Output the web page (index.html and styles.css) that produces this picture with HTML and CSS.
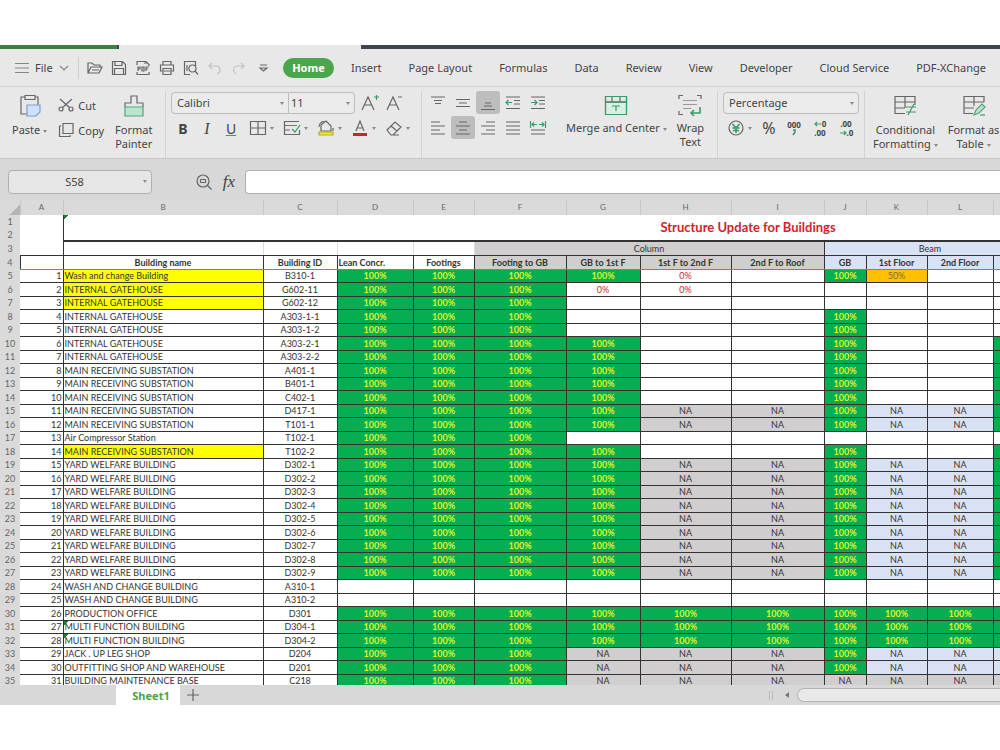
FILE: index.html
```html
<!DOCTYPE html>
<html lang="en">
<head>
<meta charset="utf-8">
<title>Structure Update for Buildings</title>
<link rel="stylesheet" href="styles.css">
</head>
<body>
<div class="app">
  <div class="titlebar"><span class="doc-tab"></span><span class="sheet-tab"></span><span class="title-rest"></span></div>

  <header class="menubar">
    <button class="file-btn">
      <svg class="hamburger" width="14" height="12" viewBox="0 0 14 12"><path d="M0 1.500h14M0 6h14M0 10.500h14"/></svg>
      <span>File</span>
      <svg class="light" width="10" height="8" viewBox="0 0 10 8"><path d="M1 2l4 4 4-4"/></svg>
    </button>
    <div class="quick">
      <button aria-label="Open"><svg width="16" height="16" viewBox="0 0 16 16"><path d="M1 13V3h4l2 2h6v2M1 13l3-6h11l-3 6zM5 10h7"/></svg></button>
      <button aria-label="Save"><svg width="16" height="16" viewBox="0 0 16 16"><path d="M1.500 1.500h10l3 3v10h-13zM4 1.500v4h7v-4M3.500 14V8.500h9V14"/></svg></button>
      <button aria-label="Export PDF"><svg width="16" height="16" viewBox="0 0 16 16"><path d="M2 5V1.500h9l3 3V6M2 12v2.500h12V12M9 3h3M3 11V7h2v2H3M7 7v4h2V7zM11 11V7h3M11 9h2"/></svg></button>
      <button aria-label="Print"><svg width="16" height="16" viewBox="0 0 16 16"><path d="M4 5V1.500h8V5M4 11H1.500V5h13v6H12M4 8.500h8v6H4zM5 11h6"/></svg></button>
      <button aria-label="Print preview"><svg width="16" height="16" viewBox="0 0 16 16"><path d="M7 14.500H1.500v-13h11V6M4 5v6"/><circle cx="9.500" cy="8.500" r="3.500"/><path d="M12 11l3 3.500"/></svg></button>
      <button aria-label="Undo" class="faint"><svg width="16" height="16" viewBox="0 0 16 16"><path d="M5 3L2 6l3 3M2 6h8c4 1 4 6 0 8"/></svg></button>
      <button aria-label="Redo" class="faint"><svg width="16" height="16" viewBox="0 0 16 16"><path d="M10 3l3 3-3 3M13 6H6C1 7 2 12 5 14"/></svg></button>
      <button aria-label="More"><svg width="16" height="16" viewBox="0 0 16 16"><path d="M5 5h7M5 8l3.500 3L12 8z"/></svg></button>
    </div>
    <nav class="tabs">
      <button class="tab home">Home</button>
      <button class="tab">Insert</button>
      <button class="tab">Page Layout</button>
      <button class="tab">Formulas</button>
      <button class="tab">Data</button>
      <button class="tab">Review</button>
      <button class="tab">View</button>
      <button class="tab">Developer</button>
      <button class="tab">Cloud Service</button>
      <button class="tab">PDF-XChange</button>
    </nav>
  </header>

  <section class="ribbon">
    <div class="group clipboard">
      <button class="big">
        <svg width="24" height="24" viewBox="0 0 24 24"><path d="M7 3H3v17h7M17 3h3v8M7 1.500h10v4H7z"/><path class="blue" d="M9 11h13v7l-4 4H9z"/></svg>
        <span>Paste<i class="caret"></i></span>
      </button>
      <div class="stack">
        <button class="inline"><svg width="16" height="16" viewBox="0 0 16 16"><path d="M2 2l10 9M14 2L4 11"/><circle cx="3" cy="12" r="2"/><circle cx="13" cy="12" r="2"/></svg>Cut</button>
        <button class="inline"><svg width="16" height="16" viewBox="0 0 16 16"><path d="M5 1.500h10v10H5zM3 4H1.500v10.500H12V13"/></svg>Copy</button>
      </div>
      <button class="big">
        <svg width="24" height="24" viewBox="0 0 24 24"><path d="M3 13V9h6V2h6v7h6v4"/><path class="greenfill" d="M3 13h18v9H3z"/></svg>
        <span>Format<br>Painter</span>
      </button>
    </div>

    <div class="group font">
      <div class="row">
        <label class="pick face"><select aria-label="Font"><option>Calibri</option></select></label>
        <label class="pick size"><select aria-label="Font size"><option>11</option></select></label>
        <button class="letter" aria-label="Grow font"><svg width="20" height="18" viewBox="0 0 20 18"><path d="M2 16L8 3l6 13M4 11h8"/><path class="green" d="M14 3h5M16.500 1v5"/></svg></button>
        <button class="letter" aria-label="Shrink font"><svg width="20" height="18" viewBox="0 0 20 18"><path d="M2 16L8 3l6 13M4 11h8M13 3h4"/></svg></button>
      </div>
      <div class="row marks">
        <button class="sq"><b>B</b></button>
        <button class="sq"><em>I</em></button>
        <button class="sq"><u>U</u></button>
        <button class="drop" aria-label="Borders"><svg width="18" height="18" viewBox="0 0 18 18"><path d="M1.500 2.500h15v13h-15zM9 2.500v13M1.500 9h15"/></svg><i class="caret"></i></button>
        <button class="drop" aria-label="Cell style"><svg width="18" height="18" viewBox="0 0 18 18"><path d="M16 2.500H1.500v13h15V11M1.500 6.500H13M1.500 11H7"/><path class="green" d="M4 6.500h10M9 10l3 3 5-7"/></svg><i class="caret"></i></button>
        <button class="drop" aria-label="Fill color"><svg width="18" height="18" viewBox="0 0 18 18"><path d="M4 6l5-4 5 5v5H4zM2 8c0-4 3-6 6-5M16 9v3"/><path class="yellow" d="M2 13h14v3H2z"/></svg><i class="caret"></i></button>
        <button class="drop" aria-label="Font color"><svg width="18" height="18" viewBox="0 0 18 18"><path d="M5 12L9 2l4 10M6 9h6"/><path class="red" d="M2 14h14v3H2z"/></svg><i class="caret"></i></button>
        <button class="drop" aria-label="Clear"><svg width="18" height="18" viewBox="0 0 18 18"><path d="M2 11l8-8 6 5-8 8H6zM6 7l6 5M8 16h6"/></svg><i class="caret"></i></button>
      </div>
    </div>

    <div class="group align">
      <div class="aligns">
        <button aria-label="Top align"><svg width="18" height="18" viewBox="0 0 18 18"><path d="M2 3h14M5 6.500h8M6 9.500h6"/></svg></button>
        <button aria-label="Middle align"><svg width="18" height="18" viewBox="0 0 18 18"><path d="M2 5.500h14M5 9h8M2 12.500h14"/></svg></button>
        <button aria-label="Bottom align" class="on"><svg width="18" height="18" viewBox="0 0 18 18"><path d="M6 9h6M5 12h8M2 15.500h14"/></svg></button>
        <button aria-label="Decrease indent"><svg width="18" height="18" viewBox="0 0 18 18"><path d="M2 3h14M10 6.500h6M10 10h6M2 14.500h14"/><path class="green" d="M2 8.500h6M4.500 6L2 8.500 4.500 11"/></svg></button>
        <button aria-label="Increase indent"><svg width="18" height="18" viewBox="0 0 18 18"><path d="M2 3h14M10 6.500h6M10 10h6M2 14.500h14"/><path class="green" d="M2 8.500h6M5.500 6L8 8.500 5.500 11"/></svg></button>
        <button aria-label="Align left"><svg width="18" height="18" viewBox="0 0 18 18"><path d="M2 3h9M2 7h14M2 11h9M2 15h14"/></svg></button>
        <button aria-label="Center" class="on"><svg width="18" height="18" viewBox="0 0 18 18"><path d="M5 3h8M2 7h14M5 11h8M2 15h14"/></svg></button>
        <button aria-label="Align right"><svg width="18" height="18" viewBox="0 0 18 18"><path d="M7 3h9M2 7h14M7 11h9M2 15h14"/></svg></button>
        <button aria-label="Justify"><svg width="18" height="18" viewBox="0 0 18 18"><path d="M2 3h14M2 7h14M2 11h14M2 15h14"/></svg></button>
        <button aria-label="Distribute"><svg width="18" height="18" viewBox="0 0 18 18"><path d="M2 11h14M2 15h14"/><path class="green" d="M1.500 2v7M16.500 2v7M3 5.500h5M10 5.500h5M5 3.500l-2 2 2 2M13 3.500l2 2-2 2"/></svg></button>
      </div>
      <button class="big merge">
        <svg width="24" height="24" viewBox="0 0 24 24"><path class="greenfill pale" d="M1.500 8h21v12.500h-21z"/><path d="M1.500 2.500h21V8h-21zM8 2.500V8M16 2.500V8"/><path class="green" d="M1.500 2.500h21v18h-21zM1.500 8h21M8 12h8M12 12v5"/></svg>
        <span>Merge and Center<i class="caret"></i></span>
      </button>
      <button class="big">
        <svg width="24" height="24" viewBox="0 0 24 24"><path d="M1 5V1.500h4M19 1.500h4V5M1 17v3.500h4"/><path class="soft" d="M5 6.500h14M5 10.500h14M5 14.500h8"/><path class="green thick" d="M22 13v6h-9M16 16l-3 3 3 3"/></svg>
        <span>Wrap<br>Text</span>
      </button>
    </div>

    <div class="group number">
      <div class="row"><label class="pick format"><select aria-label="Number format"><option>Percentage</option></select></label></div>
      <div class="row formats">
        <button class="drop" aria-label="Currency"><svg width="18" height="18" viewBox="0 0 18 18"><circle cx="9" cy="9" r="7"/><path class="green thick" d="M5.500 5L9 9l3.500-4M5.500 9h7M6 11.500h6M9 9v5"/></svg><i class="caret"></i></button>
        <button class="pct">%</button>
        <button class="digits" aria-label="Comma style"><span>000</span><svg width="16" height="8" viewBox="0 0 16 8"><path class="green thick" d="M7 1h2v2L7 6"/></svg></button>
        <button class="digits" aria-label="Increase decimal"><span class="pair"><svg width="8" height="8" viewBox="0 0 8 8"><path class="green" d="M7 4H1M3 2L1 4l2 2"/></svg>0</span><span>.00</span></button>
        <button class="digits" aria-label="Decrease decimal"><span>.00</span><span class="pair"><svg width="8" height="8" viewBox="0 0 8 8"><path class="green" d="M1 4h6M5 2l2 2-2 2"/></svg>.0</span></button>
      </div>
    </div>

    <div class="group styles">
      <button class="big">
        <svg width="24" height="24" viewBox="0 0 24 24"><path d="M12 19.500H2v-17h20V11M2 8h20M2 14h10M12 2.500V14"/><path class="green" d="M13 13h10M13 18h10M21 10l-6 11"/></svg>
        <span>Conditional<br>Formatting<i class="caret"></i></span>
      </button>
      <button class="big">
        <svg width="24" height="24" viewBox="0 0 24 24"><path d="M11 19.500H2v-17h20V8M2 8h20M2 14h10M12 2.500V12"/><path class="greenfill" d="M12 21l2-5 6-6 3 3-6 6z"/><path class="green" d="M18 21h5"/></svg>
        <span>Format as<br>Table<i class="caret"></i></span>
      </button>
    </div>
  </section>

  <section class="formula">
    <label class="namebox"><input aria-label="Name box" value="S58"><i class="caret"></i></label>
    <button aria-label="Find" class="find"><svg width="18" height="18" viewBox="0 0 18 18"><circle cx="8" cy="8" r="6"/><path d="M5.500 6.500h5M5.500 9.500h5M5.500 6.500v3M10.500 6.500v3M12.500 12.500l4 4"/></svg></button>
    <button class="fx"><em>fx</em></button>
    <input class="formula-input" aria-label="Formula">
  </section>

  <main class="sheet">
    <table class="grid">
      <colgroup>
        <col class="c-num"><col class="c-a"><col class="c-b"><col class="c-c"><col class="c-d"><col class="c-e"><col class="c-f"><col class="c-g"><col class="c-h"><col class="c-i"><col class="c-j"><col class="c-k"><col class="c-l"><col class="c-m"><col class="c-n">
      </colgroup>
      <thead>
        <tr class="letters"><th class="corner"></th><th>A</th><th>B</th><th>C</th><th>D</th><th>E</th><th>F</th><th>G</th><th>H</th><th>I</th><th>J</th><th>K</th><th>L</th><th></th><th></th></tr>
        <tr><th class="num">1</th><td class="plain" rowspan="3"></td><td class="title flag" colspan="13" rowspan="2">Structure Update for Buildings</td></tr>
        <tr><th class="num">2</th></tr>
        <tr class="tall"><th class="num">3</th><td class="thin"></td><td class="thin"></td><td class="thin"></td><td class="thin"></td><td class="grey" colspan="4">Column</td><td class="blue" colspan="4">Beam</td><td></td></tr>
        <tr class="tall heads"><th class="num">4</th><td></td><td>Building name</td><td>Building ID</td><td class="left">Lean Concr.</td><td>Footings</td><td class="grey">Footing to GB</td><td class="grey">GB to 1st F</td><td class="grey">1st F to 2nd F</td><td class="grey">2nd F to Roof</td><td class="blue">GB</td><td class="blue">1st Floor</td><td class="blue">2nd Floor</td><td class="blue"></td><td></td></tr>
      </thead>
      <tbody id="rows"></tbody>
    </table>
  </main>

  <footer class="sheetbar">
    <button class="sheet-name">Sheet1</button>
    <button class="add" aria-label="Add sheet"><svg width="14" height="14" viewBox="0 0 14 14"><path d="M7 1v12M1 7h12"/></svg></button>
    <span class="split"></span>
    <button class="scroll-left" aria-label="Scroll left"></button>
    <span class="track"></span>
  </footer>
</div>
<script src="rows.js"></script>
</body>
</html>
```

FILE: styles.css
```css
* { box-sizing: border-box; }

body {
  margin: 0;
  height: 100vh;
  padding: 45px 0;
  background: #fff;
  color: #444;
  font: 11px/15px "Noto Sans", "Open Sans", sans-serif;
  overflow: hidden;
}

button, input, select { font: inherit; color: inherit; }
button { border: 0; padding: 0; background: none; white-space: nowrap; }
svg { display: block; flex: none; fill: none; stroke: #666; stroke-width: 1.2; }
svg .green { stroke: #3a9c68; }
svg .thick { stroke-width: 1.6; }
svg .greenfill { fill: #b9e6cd; stroke: #58a27c; }
svg .pale { fill: #d9efe3; }
svg .blue { fill: #cfe0fa; stroke: #7d9fd4; }
svg .yellow { fill: #f2ea1c; stroke: #b3ad35; }
svg .red { fill: #d5202a; stroke: none; }
svg .soft { stroke: #999; }

.app { display: flex; flex-direction: column; height: 100%; overflow: hidden; background: #e8e8e8; }

.titlebar { display: flex; flex: none; height: 4px; }
.doc-tab { width: 119px; background: #3a813d; border-right: 2px solid #3b4350; }
.sheet-tab { width: 242px; }
.title-rest { flex: 1; background: #3b4350; }

.menubar { display: flex; flex: none; align-items: center; height: 38px; border-bottom: 1px solid #d2d2d2; }
.file-btn { display: flex; align-items: center; gap: 6px; width: 79px; height: 22px; padding-left: 15px; border-right: 1px solid #cfcfcf; }
.hamburger, .light { stroke: #888; }
.quick { display: flex; gap: 8px; padding-left: 8px; }
.faint svg { stroke: #c2c2c2; }
.tabs { display: flex; align-items: center; gap: 27px; margin-left: 12px; }
.tab { height: 20px; }
.home { width: 51px; margin-right: -10px; border-radius: 10px; background: #4aa54c; color: #fff; font-weight: bold; }

.ribbon { display: flex; flex: none; height: 72px; padding-top: 4px; border-bottom: 1px solid #c6c6c6; }
.group { display: flex; flex: none; border-right: 1px solid #d2d2d2; }
.big { display: flex; flex-direction: column; align-items: center; justify-content: flex-start; gap: 5px; padding-top: 3px; line-height: 14px; }
.caret { display: inline-block; margin-left: 3px; border: 2px solid transparent; border-top: 3px solid #888; border-bottom: 0; vertical-align: middle; }
.row { display: flex; align-items: center; height: 23px; }

.clipboard { width: 166px; gap: 11px; padding-left: 12px; }
.stack { display: flex; flex-direction: column; gap: 9px; padding-top: 6px; }
.inline { display: flex; align-items: center; gap: 4px; height: 16px; }

.font { flex-direction: column; gap: 2px; width: 256px; padding-left: 5px; }
.pick { position: relative; display: block; height: 22px; border: 1px solid #bdbdbd; background: #ebebeb; }
.pick select { width: 100%; height: 20px; padding: 0 5px; border: 0; background: none; appearance: none; }
.pick::after { content: ""; position: absolute; top: 9px; right: 4px; border: 2px solid transparent; border-top: 3px solid #888; border-bottom: 0; }
.face { width: 118px; border-radius: 4px 0 0 4px; }
.size { width: 66px; border-left: 0; border-radius: 0 4px 4px 0; }
.size select { padding-left: 2px; }
.letter { margin-left: 5px; }
.marks { height: 24px; }
.sq { width: 24px; font-size: 14px; }
.sq em { font-family: "Liberation Serif", serif; font-size: 16px; }
.sq u { text-decoration-color: #3a9c68; }
.drop { display: flex; align-items: center; width: 34px; }
.marks .drop:nth-child(4) { margin-left: 6px; }

.align { width: 296px; padding-left: 4px; }
.aligns { display: grid; grid-template-columns: repeat(5, 24px); grid-template-rows: 23px 23px; gap: 2px 1px; align-content: start; }
.aligns button { display: flex; align-items: center; justify-content: center; border-radius: 3px; }
.on { background: #bdbdbd; }
.merge { margin-left: 16px; }
.align .big { gap: 3px; }
.merge + .big { margin-left: 10px; }

.number { flex-direction: column; gap: 2px; width: 147px; padding-left: 5px; }
.format { width: 136px; border-radius: 4px; }
.formats { height: 24px; padding-left: 4px; }
.formats .drop { width: 32px; }
.pct { width: 20px; font-size: 16px; }
.digits { display: flex; flex-direction: column; align-items: center; width: 22px; margin-left: 4px; font-size: 8px; line-height: 9px; font-weight: bold; }
.pair { display: flex; align-items: center; }

.styles { gap: 10px; padding-left: 8px; border-right: 0; }
.styles .big { gap: 5px; }

.formula { display: flex; flex: none; align-items: center; height: 41px; padding: 4px 0 0 8px; background: #d8d8d8; }
.namebox { display: flex; align-items: center; width: 144px; height: 24px; padding-right: 4px; border: 1px solid #b0b0b0; border-radius: 4px; background: #e6e6e6; }
.namebox input { flex: 1; min-width: 0; border: 0; background: none; text-align: center; }
.find { margin-left: 43px; }
.fx { width: 22px; margin: 0 5px; font-family: "Liberation Serif", serif; font-size: 17px; }
.formula-input { flex: 1; height: 24px; border: 1px solid #b0b0b0; border-right: 0; border-radius: 4px 0 0 4px; background: #fff; }

.sheet { flex: 1; min-height: 0; overflow: hidden; background: #fff; }
.grid { width: 1433px; table-layout: fixed; border-collapse: collapse; color: #333; font: 9px/11px Lato, sans-serif; }
.c-num { width: 20px; } .c-a { width: 43px; } .c-b { width: 200px; } .c-c { width: 74px; }
.c-d { width: 76px; } .c-e { width: 61px; } .c-f { width: 92px; } .c-g { width: 74px; }
.c-h { width: 91px; } .c-i { width: 93px; } .c-j { width: 42px; } .c-k { width: 61px; }
.c-l { width: 66px; } .c-m { width: 43px; } .c-n { width: 397px; }
.grid tr { height: 13px; }
.grid .tall { height: 14px; }
.grid td, .grid th { padding: 0; border: 1px solid #333; text-align: center; white-space: nowrap; overflow: hidden; }
.grid th { border: 0; background: #dadada; color: #666; font-weight: normal; }
.grid .letters { height: 15px; font-size: 8px; }
.grid .letters th { border-right: 1px solid #c6c6c6; }
.grid .corner { background: linear-gradient(135deg, #dadada 70%, #b5b5b5 70%); }
.grid .plain { border-top: 0; border-left: 0; }
.grid .title { border-top: 0; border-bottom: 2px solid #333; color: #d3232b; font-size: 13px; font-weight: bold; }
.grid .thin { border-left-color: #ddd; border-right-color: #ddd; }
.grid .heads td { border-bottom-color: #5c9c55; font-weight: bold; }
.grid .left { padding-left: 1px; text-align: left; }
.grid .name { padding-left: 1px; text-align: left; }
.grid .seq { padding-right: 1px; border-left: 0; text-align: right; }
.grid .yellow { background: #ff0; }
.grid .grey { background: #d0cece; }
.grid .blue { background: #d9e1f4; }
.grid .done { background: #07ae51; color: #dff52a; font-weight: bold; }
.grid .part { background: #ffc000; color: #75702c; }
.grid .zero { color: #d3232b; }
.grid .flag { background-image: linear-gradient(135deg, #1f7a35 3px, transparent 3px); background-repeat: no-repeat; }

.sheetbar { display: flex; flex: none; align-items: center; height: 20px; padding-left: 116px; background: #d8d8d8; }
.sheet-name { width: 64px; height: 20px; padding-left: 6px; background: #fff; color: #4aa54c; font-weight: bold; }
.add { margin-left: 6px; }
.split { width: 4px; height: 9px; margin-left: auto; border: 1px solid #bbb; border-width: 0 1px; }
.scroll-left { margin: 0 8px 0 12px; border: 3px solid transparent; border-right: 4px solid #777; border-left: 0; }
.track { width: 23%; height: 14px; border: 1px solid #b5b5b5; border-right: 0; border-radius: 7px 0 0 7px; background: #e9e9e9; }
```

FILE: rows.js
```js
// Each row: building name, building ID, status of columns D to M.
// x = 100%, z = 0%, h = 50%, g = NA on grey, b = NA on blue,
// X = green without a value, B / G = blue / grey without a value, . = empty.
const rows = [
  ["Wash and change Building", "B310-1", "xxxxz.xh..", "yellow"],
  ["INTERNAL GATEHOUSE", "G602-11", "xxxzz.....", "yellow"],
  ["INTERNAL GATEHOUSE", "G602-12", "xxx.......", "yellow"],
  ["INTERNAL GATEHOUSE", "A303-1-1", "xxx...x..."],
  ["INTERNAL GATEHOUSE", "A303-1-2", "xxx...x..."],
  ["INTERNAL GATEHOUSE", "A303-2-1", "xxxx..x..X"],
  ["INTERNAL GATEHOUSE", "A303-2-2", "xxxx..x..X"],
  ["MAIN RECEIVING SUBSTATION", "A401-1", "xxxx..x..X"],
  ["MAIN RECEIVING SUBSTATION", "B401-1", "xxxx..x..X"],
  ["MAIN RECEIVING SUBSTATION", "C402-1", "xxxx..x..X"],
  ["MAIN RECEIVING SUBSTATION", "D417-1", "xxxxggxbbX"],
  ["MAIN RECEIVING SUBSTATION", "T101-1", "xxxxggxbbX"],
  ["Air Compressor Station", "T102-1", "xxx......."],
  ["MAIN RECEIVING SUBSTATION", "T102-2", "xxxx..x..X", "yellow"],
  ["YARD WELFARE BUILDING", "D302-1", "xxxxggxbbX"],
  ["YARD WELFARE BUILDING", "D302-2", "xxxxggxbbX"],
  ["YARD WELFARE BUILDING", "D302-3", "xxxxggxbbX"],
  ["YARD WELFARE BUILDING", "D302-4", "xxxxggxbbX"],
  ["YARD WELFARE BUILDING", "D302-5", "xxxxggxbbX"],
  ["YARD WELFARE BUILDING", "D302-6", "xxxxggxbbX"],
  ["YARD WELFARE BUILDING", "D302-7", "xxxxggxbbX"],
  ["YARD WELFARE BUILDING", "D302-8", "xxxxggxbbX"],
  ["YARD WELFARE BUILDING", "D302-9", "xxxxggxbbX"],
  ["WASH AND CHANGE BUILDING", "A310-1", ".........."],
  ["WASH AND CHANGE BUILDING", "A310-2", ".........."],
  ["PRODUCTION OFFICE", "D301", "xxxxxxxxxX"],
  ["MULTI FUNCTION BUILDING", "D304-1", "xxxxxxxxxX", "flag"],
  ["MULTI FUNCTION BUILDING", "D304-2", "xxxxxxxxxX", "flag"],
  ["JACK . UP LEG SHOP", "D204", "xxxgggxbbB"],
  ["OUTFITTING SHOP AND WAREHOUSE", "D201", "xxxgggxbbB"],
  ["BUILDING MAINTENANCE BASE", "C218", "xxxggggggG"]
];
const status = {
  x: ["done", "100%"], X: ["done", ""], z: ["zero", "0%"], h: ["part", "50%"],
  g: ["grey", "NA"], G: ["grey", ""], b: ["blue", "NA"], B: ["blue", ""], ".": ["", ""]
};
const cell = (tag, cls, text) => `<${tag} class="${cls}">${text}</${tag}>`;

document.getElementById("rows").innerHTML = rows.map(([name, id, marks, mark = ""], i) =>
  `<tr class="${i % 2 ? "tall" : ""}">` +
  cell("th", "num", i + 5) +
  cell("td", "seq", i + 1) +
  cell("td", "name " + mark, name) +
  cell("td", "", id) +
  [...marks].map(m => cell("td", ...status[m])).join("") +
  cell("td", "", "") + "</tr>"
).join("");
```
